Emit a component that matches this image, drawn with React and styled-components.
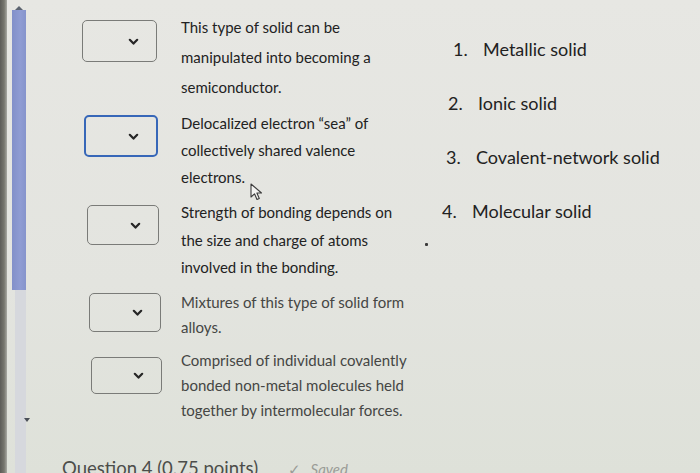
import React from 'react';
import styled, { createGlobalStyle } from 'styled-components';

const GlobalStyle = createGlobalStyle`
  html, body {
    margin: 0;
    padding: 0;
  }
  body {
    background: linear-gradient(180deg, #e7e7e3 0%, #e3e4df 60%, #dee1d9 100%);
    font-family: Lato, "Open Sans", "Liberation Sans", sans-serif;
  }
`;

// Each question: text lines, the line height and the select box geometry
const questions = [
  {
    lines: ['This type of solid can be', 'manipulated into becoming a', 'semiconductor.'],
    lh: 30,
    box: { w: 75, h: 42, top: 8, shift: 0 },
  },
  {
    lines: ['Delocalized electron \u201csea\u201d of', 'collectively shared valence', 'electrons.'],
    lh: 27,
    box: { w: 74, h: 42, top: 5, shift: 2 },
    focused: true,
  },
  {
    lines: ['Strength of bonding depends on', 'the size and charge of atoms', 'involved in the bonding.'],
    lh: 27.5,
    box: { w: 72, h: 40, top: 6, shift: 5 },
  },
  {
    lines: ['Mixtures of this type of solid form', 'alloys.'],
    lh: 25,
    box: { w: 72, h: 39, top: 3, shift: 7 },
    light: true,
  },
  {
    lines: ['Comprised of individual covalently', 'bonded non-metal molecules held', 'together by intermolecular forces.'],
    lh: 25,
    box: { w: 71, h: 37, top: 9, shift: 9 },
    light: true,
  },
];

const answers = [
  { n: '1.', label: 'Metallic solid', shift: 11 },
  { n: '2.', label: 'Ionic solid', shift: 6 },
  { n: '3.', label: 'Covalent-network solid', shift: 4 },
  { n: '4.', label: 'Molecular solid', shift: 0 },
];

function Chevron() {
  return (
    <svg width="11" height="8" viewBox="0 0 11 8">
      <path d="M1.8 1.8 L5.5 5.6 L9.2 1.8" fill="none" stroke="#262626" strokeWidth="2.2" strokeLinecap="round" strokeLinejoin="round" />
    </svg>
  );
}

function Cursor() {
  return (
    <svg width="14" height="18" viewBox="0 0 14 18">
      <path d="M1 1 L1 14 L4.5 10.8 L7 16.5 L9.3 15.5 L6.9 10 L11.5 10 Z" fill="#f4f4f2" stroke="#3c3c3c" strokeWidth="1.1" strokeLinejoin="round" />
    </svg>
  );
}

function App() {
  return (
    <>
      <GlobalStyle />
      <Screen>
        <Bezel />
        <ScrollBar>
          <ArrowUp />
          <Thumb />
          <Track>
            <ArrowDown />
          </Track>
        </ScrollBar>
        <Main>
          <Content>
            <Questions>
              {questions.map((q, i) => (
                <Row key={i}>
                  <SelectCell>
                    <SelectBox
                      $w={q.box.w}
                      $h={q.box.h}
                      $top={q.box.top}
                      $shift={q.box.shift}
                      $focused={q.focused}
                    >
                      <Chevron />
                    </SelectBox>
                  </SelectCell>
                  <Prompt $lh={q.lh} $light={q.light}>
                    {q.lines.map((l, j) => (
                      <span key={j}>{l}</span>
                    ))}
                  </Prompt>
                </Row>
              ))}
              <CursorMark>
                <Cursor />
              </CursorMark>
            </Questions>
            <Answers>
              {answers.map((a) => (
                <Answer key={a.n} $shift={a.shift}>
                  <Num>{a.n}</Num>
                  <span>{a.label}</span>
                </Answer>
              ))}
              <Speck />
            </Answers>
          </Content>
          <Footer>
            <QuestionTitle>Question 4 (0.75 points)</QuestionTitle>
            <Saved>
              <span>&#10003;</span> Saved
            </Saved>
          </Footer>
        </Main>
      </Screen>
    </>
  );
}

const Screen = styled.div`
  display: flex;
  height: 473px;
  overflow: hidden;
`;

const Bezel = styled.div`
  width: 7px;
  flex-shrink: 0;
  background: linear-gradient(90deg, #5c5c58 0%, #77776f 60%, #a9aaa4 100%);
`;

const ScrollBar = styled.div`
  width: 18px;
  margin-left: 3px;
  margin-right: 4px;
  display: flex;
  flex-direction: column;
  align-items: stretch;
`;

const ArrowUp = styled.div`
  height: 10px;
  display: flex;
  justify-content: center;
  &::before {
    content: '';
    margin-top: 1px;
    border-left: 4px solid transparent;
    border-right: 4px solid transparent;
    border-bottom: 4px solid #5c6470;
  }
`;

const Thumb = styled.div`
  height: 280px;
  margin: 0 2px;
  background: linear-gradient(90deg, #8290c9 0%, #8f9cd3 60%, #8694cc 100%);
`;

const Track = styled.div`
  flex: 1;
  margin: 0 2px 0 5px;
  background: #d6d8dd;
  display: flex;
  justify-content: flex-end;
  align-items: flex-start;
  padding-top: 128px;
`;

const ArrowDown = styled.div`
  margin-right: -4px;
  border-left: 3.5px solid transparent;
  border-right: 3.5px solid transparent;
  border-top: 4px solid #4a4f58;
`;

const Main = styled.div`
  flex: 1;
  display: flex;
  flex-direction: column;
  padding-left: 30px;
  padding-top: 12px;
`;

const Content = styled.div`
  display: flex;
`;

const Questions = styled.div`
  position: relative;
  box-sizing: border-box;
  width: 380px;
  padding-left: 20px;
  display: flex;
  flex-direction: column;
  gap: 8px;
`;

const Row = styled.div`
  display: flex;
  align-items: flex-start;
`;

const SelectCell = styled.div`
  width: 99px;
  flex-shrink: 0;
`;

const SelectBox = styled.div`
  box-sizing: border-box;
  width: ${(p) => p.$w}px;
  height: ${(p) => p.$h}px;
  margin-top: ${(p) => p.$top}px;
  margin-left: ${(p) => p.$shift}px;
  border: ${(p) => (p.$focused ? '2px solid #3767b8' : '1.5px solid #7a7b78')};
  border-radius: 5px;
  background: transparent;
  display: flex;
  align-items: center;
  justify-content: flex-end;
  padding-right: 17px;
  padding-top: 1px;
`;

const Prompt = styled.div`
  display: flex;
  flex-direction: column;
  font-size: 15px;
  line-height: ${(p) => p.$lh}px;
  color: ${(p) => (p.$light ? '#454644' : '#222')};
  white-space: nowrap;
`;

const CursorMark = styled.div`
  position: absolute;
  left: 188px;
  top: 171px;
`;

const Answers = styled.div`
  position: relative;
  flex: 1;
  padding-top: 26px;
  display: flex;
  flex-direction: column;
  gap: 32px;
`;

const Answer = styled.div`
  display: flex;
  margin-left: ${(p) => p.$shift}px;
  font-size: 18px;
  line-height: 22px;
  color: #222;
  white-space: nowrap;
`;

const Num = styled.span`
  width: 30px;
  flex-shrink: 0;
`;

const Speck = styled.div`
  position: absolute;
  left: -17px;
  top: 231px;
  width: 3px;
  height: 3px;
  border-radius: 1px;
  background: #3a3a3a;
`;

const Footer = styled.div`
  display: flex;
  align-items: baseline;
  gap: 30px;
  margin-top: 34px;
`;

const QuestionTitle = styled.div`
  font-size: 18.5px;
  color: #4c4d4a;
  white-space: nowrap;
`;

const Saved = styled.div`
  font-size: 15px;
  font-style: italic;
  color: #9a9c97;
  span {
    font-style: normal;
    margin-right: 6px;
  }
`;

export default App;
